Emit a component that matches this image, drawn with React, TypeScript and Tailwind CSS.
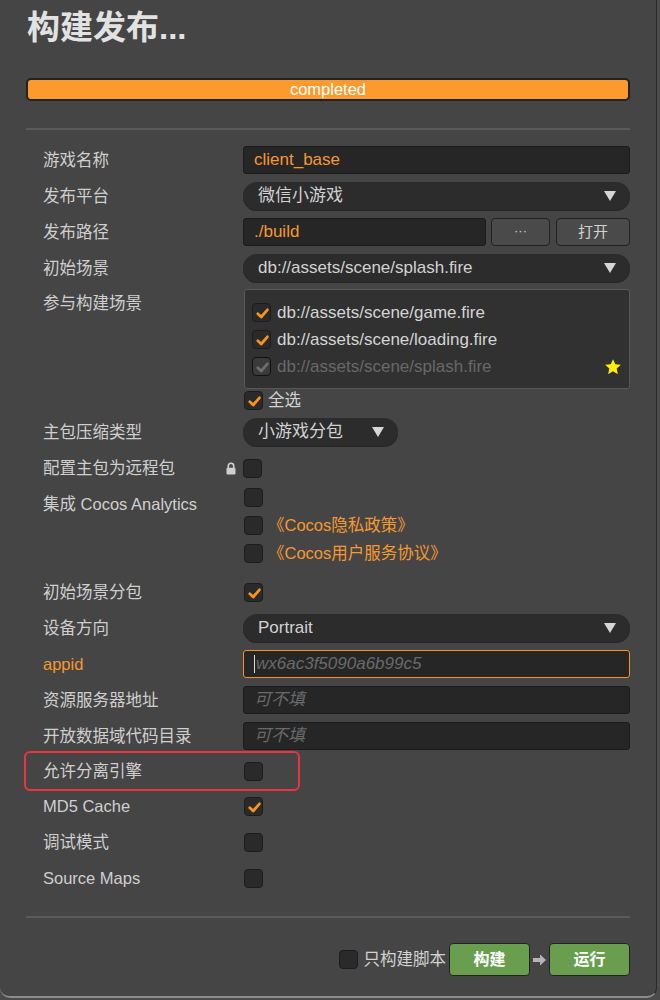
import React from 'react';

const Check: React.FC<{ color?: string }> = ({ color = '#f7931e' }) => (
  <svg width="19" height="19" viewBox="0 0 19 19" className="absolute left-0 top-0">
    <path d="M4.8 9.8 L8.2 13 L14.4 5.8" fill="none" stroke={color} strokeWidth="2.8" strokeLinecap="round" strokeLinejoin="round" />
  </svg>
);

const Checkbox: React.FC<{ checked?: boolean; disabled?: boolean }> = ({ checked, disabled }) => (
  <span
    className={
      disabled
        ? 'relative inline-block w-[19px] h-[19px] shrink-0 rounded-[4px] bg-[#3a3a3a] border border-[#111]'
        : 'relative inline-block w-[19px] h-[19px] shrink-0 rounded-[4px] bg-[#2a2a2a] border border-[#1c1c1c]'
    }
  >
    {checked && <Check color={disabled ? '#6e6e6e' : '#f7931e'} />}
  </span>
);

const Arrow: React.FC = () => (
  <svg width="12" height="10" viewBox="0 0 12 10">
    <polygon points="0,0 12,0 6,10" fill="#d6d6d6" />
  </svg>
);

const Select: React.FC<{ value: string; className?: string }> = ({ value, className = 'flex-1' }) => (
  <div className={`${className} h-[28px] rounded-full bg-[#2c2c2c] shadow-[0_1px_0_#252525] flex items-center justify-between pl-[15px] pr-[14px] text-[17px] text-[#d2d2d2]`}>
    <span>{value}</span>
    <Arrow />
  </div>
);

const Input: React.FC<{ value?: string; placeholder?: string; focused?: boolean; className?: string }> = ({
  value,
  placeholder,
  focused,
  className = 'flex-1',
}) => (
  <div
    className={`${className} h-[28px] rounded-[3px] bg-[#262626] border ${
      focused ? 'border-[#f7931e]' : 'border-[#1b1b1b]'
    } flex items-center pl-[10px] text-[17px]`}
  >
    {focused && <span className="w-px h-[18px] bg-[#d8d8d8] mr-[1px]" />}
    {value ? (
      <span className="text-[#f5982f]">{value}</span>
    ) : (
      <span className="italic text-[#6a6a6a]">{placeholder}</span>
    )}
  </div>
);

const Row: React.FC<{ label: string; labelClass?: string; className?: string; children?: React.ReactNode }> = ({
  label,
  labelClass = 'text-[#cfcfcf]',
  className = 'mt-[8px]',
  children,
}) => (
  <div className={`${className} flex items-center h-[28px]`}>
    <div className={`w-[217px] pl-[17px] text-[16.5px] ${labelClass}`}>{label}</div>
    <div className="flex-1 flex items-center">{children}</div>
  </div>
);

const Lock: React.FC = () => (
  <svg width="10" height="13" viewBox="0 0 10 13" className="mr-[7px]">
    <path d="M2.3 6 V4 a2.7 2.7 0 0 1 5.4 0 V6" fill="none" stroke="#cfcfcf" strokeWidth="1.6" />
    <rect x="0.5" y="5.8" width="9" height="6.7" rx="1" fill="#cfcfcf" />
  </svg>
);

const Star: React.FC = () => (
  <svg width="18" height="18" viewBox="0 0 24 24">
    <polygon points="12,1.5 15.1,8.4 22.5,9.1 16.9,14.1 18.5,21.5 12,17.7 5.5,21.5 7.1,14.1 1.5,9.1 8.9,8.4" fill="#ffee00" />
  </svg>
);

const scenes = [
  { path: 'db://assets/scene/game.fire', disabled: false },
  { path: 'db://assets/scene/loading.fire', disabled: false },
  { path: 'db://assets/scene/splash.fire', disabled: true },
];

const App: React.FC = () => {
  return (
    <div className="w-[660px] h-[1000px] bg-[#4b4b4b] font-['Liberation_Sans','Noto_Sans_CJK_SC',sans-serif]">
      <div className="w-[657px] h-[998px] bg-[#454545] border-r border-[#2a2a2a] border-b-2 border-b-[#8c8c8c] rounded-b-[10px] px-[26px] flex flex-col">
        <h1 className="pt-[8px] h-[52px] text-[33px] leading-[40px] font-bold text-[#e2e2e2] pl-[1px]">构建发布...</h1>

        <div className="mt-[26px] h-[23px] rounded-[5px] bg-[#222] p-[2px]">
          <div className="h-full rounded-[3px] bg-[#fd9a2d] flex items-center justify-center text-[16.5px] text-white leading-none">
            completed
          </div>
        </div>

        <div className="mt-[27px] h-[2px] bg-[#5a5a5a]" />

        <div className="mt-[16px] flex flex-col">
          <Row label="游戏名称" className="">
            <Input value="client_base" />
          </Row>
          <Row label="发布平台">
            <Select value="微信小游戏" />
          </Row>
          <Row label="发布路径">
            <Input value="./build" />
            <button className="ml-[5px] w-[59px] h-[28px] rounded-[4px] bg-[#4a4a4a] border border-[#222] text-[13px] text-[#cfcfcf] leading-none pb-[4px]">
              ···
            </button>
            <button className="ml-[6px] w-[74px] h-[28px] rounded-[4px] bg-[#4a4a4a] border border-[#222] text-[15px] text-[#d2d2d2]">
              打开
            </button>
          </Row>
          <Row label="初始场景">
            <Select value="db://assets/scene/splash.fire" />
          </Row>

          <div className="mt-[7px] flex">
            <div className="w-[217px] pl-[17px] h-[28px] flex items-center text-[16.5px] text-[#cfcfcf]">参与构建场景</div>
            <div className="flex-1 pl-[1px]">
              <div className="h-[100px] rounded-[3px] bg-[#313131] border border-[#585858] pt-[9px] pl-[7px] pr-[7px]">
                {scenes.map((s) => (
                  <div key={s.path} className="h-[27px] flex items-center">
                    <Checkbox checked disabled={s.disabled} />
                    <span className={`ml-[6px] flex-1 text-[17px] ${s.disabled ? 'text-[#686868]' : 'text-[#d4d4d4]'}`}>{s.path}</span>
                    {s.disabled && <Star />}
                  </div>
                ))}
              </div>
              <div className="mt-[2px] flex items-center h-[19px]">
                <Checkbox checked />
                <span className="ml-[5px] text-[16.5px] text-[#d4d4d4]">全选</span>
              </div>
            </div>
          </div>

          <Row label="主包压缩类型">
            <Select value="小游戏分包" className="w-[155px]" />
          </Row>
          <div className="mt-[8px] flex items-center h-[28px]">
            <div className="w-[217px] pl-[17px] flex items-center justify-between text-[16.5px] text-[#cfcfcf]">
              <span>配置主包为远程包</span>
              <Lock />
            </div>
            <Checkbox />
          </div>

          <div className="mt-[8px] flex">
            <div className="w-[217px] pl-[17px] h-[28px] flex items-center text-[16.5px] text-[#cfcfcf]">集成 Cocos Analytics</div>
            <div className="-mt-[2px] flex flex-col gap-[9px] pl-[1px]">
              <Checkbox />
              <div className="flex items-center h-[19px]">
                <Checkbox />
                <span className="ml-[5px] text-[16.5px] text-[#f5982f]">《Cocos隐私政策》</span>
              </div>
              <div className="flex items-center h-[19px]">
                <Checkbox />
                <span className="ml-[5px] text-[16.5px] text-[#f5982f]">《Cocos用户服务协议》</span>
              </div>
            </div>
          </div>

          <Row label="初始场景分包" className="mt-[15px]">
            <span className="pl-[1px] flex"><Checkbox checked /></span>
          </Row>
          <Row label="设备方向">
            <Select value="Portrait" />
          </Row>
          <Row label="appid" labelClass="text-[#f5982f]">
            <Input placeholder="wx6ac3f5090a6b99c5" focused />
          </Row>
          <Row label="资源服务器地址">
            <Input placeholder="可不填" />
          </Row>
          <Row label="开放数据域代码目录">
            <Input placeholder="可不填" />
          </Row>
          <div className="relative mt-[7px] flex items-center h-[28px]">
            <div className="absolute -left-[2px] -top-[6px] w-[276px] h-[40px] rounded-[6px] border-2 border-[#ec3340]" />
            <div className="w-[217px] pl-[17px] text-[16.5px] text-[#cfcfcf]">允许分离引擎</div>
            <span className="pl-[1px] flex"><Checkbox /></span>
          </div>
          <Row label="MD5 Cache" className="mt-[7px]">
            <span className="pl-[1px] flex"><Checkbox checked /></span>
          </Row>
          <Row label="调试模式">
            <span className="pl-[1px] flex"><Checkbox /></span>
          </Row>
          <Row label="Source Maps">
            <span className="pl-[1px] flex"><Checkbox /></span>
          </Row>
        </div>

        <div className="mt-[24px] h-[2px] bg-[#5a5a5a]" />

        <div className="mt-[25px] flex items-center justify-end">
          <Checkbox />
          <span className="ml-[6px] text-[16.5px] text-[#d2d2d2]">只构建脚本</span>
          <button className="ml-[3px] w-[81px] h-[33px] rounded-[4px] bg-[#699e4e] border border-[#222] text-[16px] font-bold text-white">
            构建
          </button>
          <svg width="15" height="14" viewBox="0 0 15 14" className="mx-[2px]">
            <path d="M1 5 H8 V1.5 L14 7 L8 12.5 V9 H1 Z" fill="#b5b5b5" />
          </svg>
          <button className="w-[81px] h-[33px] rounded-[4px] bg-[#699e4e] border border-[#222] text-[16px] font-bold text-white">
            运行
          </button>
        </div>
      </div>
    </div>
  );
};

export default App;
